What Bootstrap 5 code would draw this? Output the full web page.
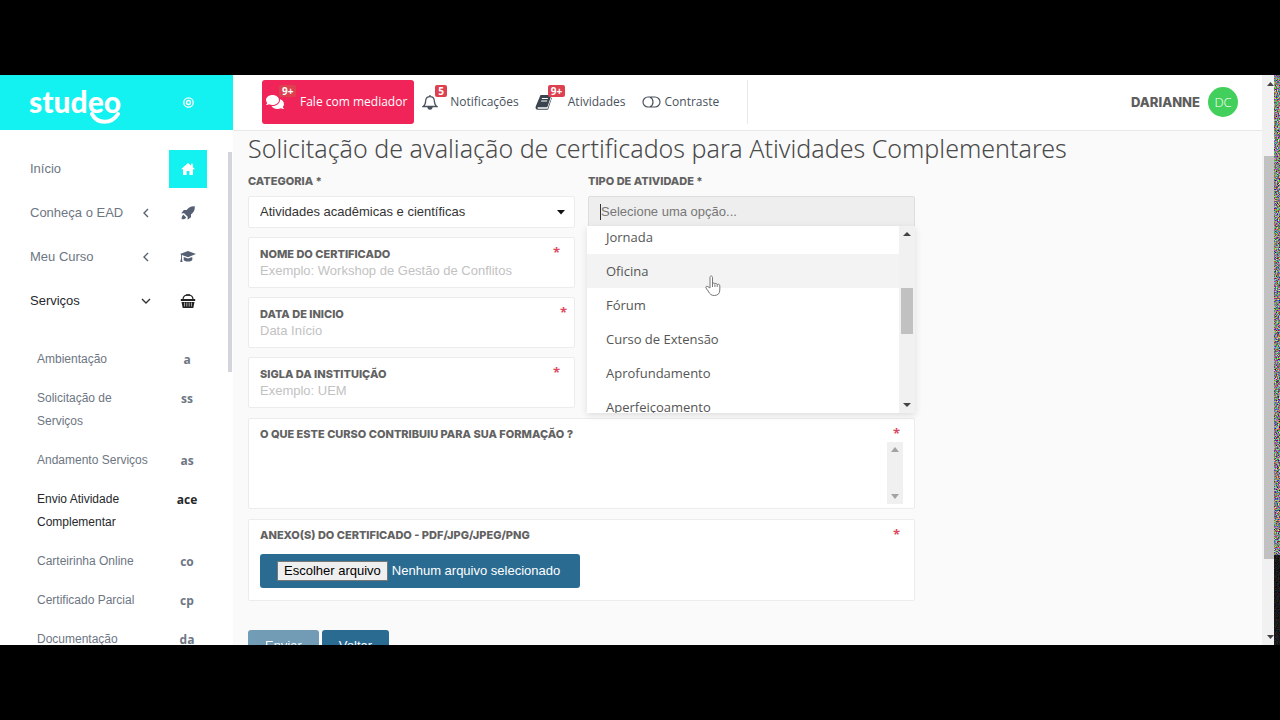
<!DOCTYPE html>
<html lang="pt-BR">
<head>
<meta charset="utf-8">
<meta name="viewport" content="width=device-width, initial-scale=1">
<title>Studeo - Atividades Complementares</title>
<link href="https://cdn.jsdelivr.net/npm/bootstrap@5.3.0/dist/css/bootstrap.min.css" rel="stylesheet">
<style>
:root{--cyan:#13f1f0;--blue:#2a6b92;--line:#ececec;--ink:#626262}
body{background:#000;font-family:"Liberation Sans",sans-serif;font-size:14px;line-height:20px;color:var(--ink)}
.stage{height:100vh;padding:75px 0}
.side{width:233px;background:#fff}
.side a{color:#6d7683;text-decoration:none}
.side a.current{color:#26282c}
.brand{height:55px;background:var(--cyan);padding:0 38px 0 29px}
.side a.brand-name{font:900 30px/30px "Lato",sans-serif;color:#fff;margin-bottom:4px}
.brand-smile{left:61px;top:26px}
.main-links a{height:38px;margin-bottom:6px;padding:0 26px 0 30px;font-size:13px}
.tile{width:38px;height:38px}
.tile-on{background:var(--cyan)}
.chev{width:10px;margin-right:18px}
.sub-links{padding:14px 0 0}
.sub-links a{padding:8px 26px 8px 37px;font-size:12px;line-height:23px}
.sub-links .sub-name{width:116px}
.sub-links b{width:40px;font-family:"Open Sans",sans-serif}
.side-thumb{top:77px;right:1px;width:4px;height:220px;background:#d3d5dc}
.content{background:#fafafa;min-width:0}
.topbar{height:56px;background:#fff;border-bottom:1px solid #e8e8e8;padding:0 24px 1px 29px;font:12px/20px "Open Sans",sans-serif;color:#49525d}
.topbar a{color:inherit;text-decoration:none}
.btn-mediator{height:44px;padding:0 7px 0 4px;background:#f12459;color:#fff;border:0;border-radius:3px;font-size:12px;line-height:20px}
.btn-mediator:hover{background:#d91f50;color:#fff}
.count{font:700 10px/12px "Open Sans",sans-serif;background:#dd4150;color:#fff;border-radius:2px;padding:0 3px;top:-9px;left:13px}
.top-sep{width:1px;height:44px;background:#e9e9e9;margin-left:28px}
.user-name{font:800 13px/20px "Inter",sans-serif;color:#5d5d5d}
.avatar{width:30px;height:30px;background:#42cf5c;color:#fff;font-size:13px}
.page-area{padding:0 15px}
h1{font:300 25px/34px "Noto Sans",sans-serif;color:#4a4a4a;margin:0 0 8px;white-space:nowrap}
.form-area{max-width:667px}
.form-area .row{--bs-gutter-x:13px}
.caps{font:800 11px/16px "Inter",sans-serif;color:var(--ink);text-transform:uppercase;display:block}
.caps-top{margin-bottom:7px}
.field,.box{background:#fff;border:1px solid var(--line);border-radius:2px}
.field{height:32px;padding:0 11px;font-size:13px;color:#333;box-shadow:none}
select.field{background-image:none}
.field-off{background:#eee;border-color:#ddd}
.field-off input::placeholder{color:#777}
.caret-bar{width:1px;height:16px;background:#333}
.pick-arrow{right:10px;top:14px}
.box{padding:8px 11px 7px;margin-top:9px}
.box-wide{padding:7px 11px 4px;margin-top:10px}
.box-file{padding-bottom:12px}
.box input[type=text],.box textarea,.field input{display:block;border:0;outline:0;background:transparent;padding:0;width:100%;height:18px;font-size:13px;line-height:18px;resize:none}
.box textarea{height:62px}
.box input::placeholder{color:#c2c2c2}
.req{top:6px;right:14px;color:#dd4a60;font:700 13px/16px "Open Sans",sans-serif}
.req-date{right:7px}
.track{width:16px;height:62px;background:#f0f0f0;padding:5px 0}
.options{top:100%;left:-1px;right:0;margin-top:-2px;height:187px;background:#fff;box-shadow:0 2px 7px rgba(0,0,0,.12);z-index:5}
.options ul{margin-top:-6px;font:13px/34px "Open Sans",sans-serif;color:#555}
.options li{padding-left:19px}
.options li.hover{background:#f3f3f3}
.options .rail{width:16px;background:#f1f1f1;padding:6px 0}
.options .rail-thumb{width:12px;height:46px;background:#c1c1c1;top:62px;left:2px}
.hand{left:118px;top:49px}
.upload{background:var(--blue);color:#fff;border-radius:3px;height:34px;width:320px;padding:0 17px;font-size:13px;margin-top:11px}
.upload button{font-size:13px;line-height:16px;padding:1px 6px;border:1px solid #777;background:#efefef;color:#000}
.actions{margin-top:29px;gap:3px}
.btn-act{background:var(--blue);color:#fff;border:0;border-radius:3px;padding:0 17px;font-size:13px;line-height:31px}
.btn-act:hover{background:#215675;color:#fff}
.btn-act:disabled{background:var(--blue);color:#fff}
.page-scroll{width:12px;background:#f1f1f1;padding:7px 0 6px 4px}
.page-thumb{background:#c1c1c1;top:81px;left:2px;right:0;height:403px}
.grain{width:6px;background:#777}
</style>
</head>
<body>
<div class="stage d-flex overflow-hidden">
  <aside class="side position-relative flex-shrink-0 overflow-hidden">
    <div class="brand d-flex align-items-center justify-content-between">
      <a href="#" class="position-relative brand-name">studeo
        <svg class="position-absolute brand-smile" width="30" height="12" viewBox="0 0 30 12" fill="none" stroke="#fff" stroke-width="4" stroke-linecap="round"><path d="M2 2Q6 9.800 14.500 9.800T28 2"/></svg>
      </a>
      <svg width="13" height="13" viewBox="0 0 13 13" fill="none" stroke="#fff"><circle cx="6.500" cy="6.500" r="4.700" stroke-width="1.300"/><circle cx="6.500" cy="6.500" r="2" stroke-width="1.400"/></svg>
    </div>
    <nav class="main-links pt-3 mt-1" aria-label="Principal">
      <a href="#" class="d-flex align-items-center"><span class="flex-fill">Início</span>
        <span class="tile tile-on d-flex align-items-center justify-content-center"><svg width="14" height="12" viewBox="0 0 14 12" fill="#fff"><path d="M7 0 0 6.300h2V12h3.600V8h2.800v4H12V6.300h2L11.800 4V.8H10v1.800z"/></svg></span></a>
      <a href="#" class="d-flex align-items-center"><span class="flex-fill">Conheça o EAD</span>
        <svg class="chev" height="10" viewBox="0 0 10 10" fill="none" stroke="#59636f" stroke-width="1.400"><path d="M7 1 3 5l4 4"/></svg>
        <span class="tile d-flex align-items-center justify-content-center"><svg width="14" height="14" viewBox="0 0 14 14" fill="#566074"><path d="M13.800.2C9.900 0 7.600 1.200 5.600 4H2.800L.3 7.300l2.900-.1 3.500 3.500-.1 3L10 11.200V8.400c2.800-2 4-4.300 3.800-8.200zM2.500 8.800C1 9.500.6 11.300.7 13.300c2 .1 3.800-.3 4.500-1.800z"/></svg></span></a>
      <a href="#" class="d-flex align-items-center"><span class="flex-fill">Meu Curso</span>
        <svg class="chev" height="10" viewBox="0 0 10 10" fill="none" stroke="#59636f" stroke-width="1.400"><path d="M7 1 3 5l4 4"/></svg>
        <span class="tile d-flex align-items-center justify-content-center"><svg width="16" height="12" viewBox="0 0 16 12" fill="#566074"><path d="M8 0 0 3l1 .5v4L.2 11h2.300L1.900 7.500V4L8 6.200 16 3zM3.700 5.900V9C5.500 11 10.500 11 12.300 9V5.900L8 7.500z"/></svg></span></a>
      <a href="#" class="d-flex align-items-center current"><span class="flex-fill">Serviços</span>
        <svg class="chev" height="10" viewBox="0 0 10 10" fill="none" stroke="#333" stroke-width="1.400"><path d="m1 3 4 4 4-4"/></svg>
        <span class="tile d-flex align-items-center justify-content-center"><svg width="16" height="14" viewBox="0 0 16 14"><path d="M3 5.500C3 2 5 1 8 1s5 1 5 4.500" fill="none" stroke="#222" stroke-width="1.200"/><path d="M6 .2h4v1.600H6zM.8 5h14.400v2H.8zM1.500 8h13l-1.200 6H2.700z" fill="#222"/><path d="M4.500 8.500v4M6.800 8.500v4M9.200 8.500v4M11.500 8.500v4" stroke="#fff" stroke-width=".6"/></svg></span></a>
    </nav>
    <nav class="sub-links" aria-label="Serviços">
      <a href="#" class="d-flex justify-content-between"><span class="sub-name">Ambientação</span><b class="text-center">a</b></a>
      <a href="#" class="d-flex justify-content-between"><span class="sub-name">Solicitação de<br>Serviços</span><b class="text-center">ss</b></a>
      <a href="#" class="d-flex justify-content-between"><span class="sub-name">Andamento Serviços</span><b class="text-center">as</b></a>
      <a href="#" class="d-flex justify-content-between current"><span class="sub-name">Envio Atividade Complementar</span><b class="text-center">ace</b></a>
      <a href="#" class="d-flex justify-content-between"><span class="sub-name">Carteirinha Online</span><b class="text-center">co</b></a>
      <a href="#" class="d-flex justify-content-between"><span class="sub-name">Certificado Parcial</span><b class="text-center">cp</b></a>
      <a href="#" class="d-flex justify-content-between"><span class="sub-name">Documentação</span><b class="text-center">da</b></a>
    </nav>
    <div class="side-thumb position-absolute"></div>
  </aside>

  <main class="content flex-fill overflow-hidden">
    <header class="topbar d-flex align-items-center">
      <button type="button" class="btn btn-mediator d-flex align-items-center">
        <span class="position-relative d-flex me-3"><svg width="18" height="16" viewBox="0 0 576 512" fill="#fff"><path d="M416 192c0-88.400-93.100-160-208-160S0 103.600 0 192c0 34.300 14.100 65.900 38 92-13.400 30.200-35.500 54.200-35.800 54.500-2.200 2.300-2.800 5.700-1.500 8.700S4.800 352 8 352c36.600 0 66.900-12.300 88.700-25 32.200 15.700 70.300 25 111.300 25 114.900 0 208-71.600 208-160zm122 220c23.900-26 38-57.700 38-92 0-66.900-53.500-124.200-129.300-148.100.9 6.600 1.300 13.300 1.300 20.100 0 105.900-107.700 192-240 192-10.800 0-21.300-.8-31.700-1.900C207.800 439.600 281.800 480 368 480c41 0 79.100-9.200 111.300-25 21.800 12.700 52.100 25 88.700 25 3.200 0 6.100-1.900 7.300-4.800 1.300-2.900.7-6.300-1.500-8.700-.3-.3-22.400-24.200-35.800-54.500z"/></svg><span class="count position-absolute">9+</span></span>
        Fale com mediador</button>
      <a href="#" class="d-flex align-items-center ms-2"><span class="position-relative d-flex me-2"><svg class="me-1" width="16" height="16" viewBox="0 0 16 16" fill="none" stroke="#49525d" stroke-width="1.300"><path d="M8 1v1.500M1.200 12.500C3.500 11 3.500 9 3.700 6.500 4 3.800 5.800 2.600 8 2.600s4 1.200 4.300 3.900c.2 2.500.2 4.500 2.500 6z"/><path d="M6 13.500c.3 2.200 3.700 2.200 4 0z" fill="#49525d"/></svg><span class="count position-absolute">5</span></span>Notificações</a>
      <a href="#" class="d-flex align-items-center ms-3"><span class="position-relative d-flex me-3"><svg width="17" height="16" viewBox="0 0 17 16"><path d="M5.500 1h9.700c.8 0 1 .5.800 1.200l-3.400 10.300c-.2.500-.6.700-1 .7H3.300c-1 0-1.200 1.500 0 1.500h9.200L16 5v-1.500l.8.800L13.300 15c-.2.600-.5.800-1 .8H3C1 15.800 0 14 .8 12.300z" fill="#3a444f"/><path d="m7 4-.3 1h6l.3-1zM6.300 6.500 6 7.500h6l.3-1z" fill="#fff"/></svg><span class="count position-absolute">9+</span></span>Atividades</a>
      <a href="#" class="d-flex align-items-center ms-3"><svg class="me-1" width="19" height="12" viewBox="0 0 19 12" fill="none" stroke="#49525d" stroke-width="1.200"><path d="M6 1h7a5 5 0 0 1 0 10H6A5 5 0 0 1 6 1zM8 1.300c4 1.700 4 7.700 0 9.400"/></svg>Contraste</a>
      <div class="top-sep"></div>
      <a href="#" class="d-flex align-items-center ms-auto"><span class="user-name me-2">DARIANNE</span><span class="avatar rounded-circle d-flex align-items-center justify-content-center fw-light">DC</span></a>
    </header>
    <div class="page-area">
      <h1>Solicitação de avaliação de certificados para Atividades Complementares</h1>
      <form class="form-area">
        <div class="row">
          <div class="col-6">
            <label class="caps caps-top" for="cat">Categoria *</label>
            <div class="position-relative">
              <select id="cat" class="form-select field"><option>Atividades acadêmicas e científicas</option></select>
              <svg class="position-absolute pick-arrow" width="8" height="5" viewBox="0 0 8 5"><path d="M0 0h8L4 4.500z" fill="#111"/></svg>
            </div>
            <div class="box position-relative"><label class="caps" for="nome">Nome do certificado</label><input type="text" id="nome" placeholder="Exemplo: Workshop de Gestão de Conflitos"><span class="req position-absolute">*</span></div>
            <div class="box position-relative"><label class="caps" for="data">Data de inicio</label><input type="text" id="data" placeholder="Data Início"><span class="req req-date position-absolute">*</span></div>
            <div class="box position-relative"><label class="caps" for="sigla">Sigla da instituição</label><input type="text" id="sigla" placeholder="Exemplo: UEM"><span class="req position-absolute">*</span></div>
          </div>
          <div class="col-6">
            <label class="caps caps-top" for="tipo">Tipo de atividade *</label>
            <div class="position-relative">
              <div class="field field-off d-flex align-items-center"><span class="caret-bar"></span><input type="text" id="tipo" role="combobox" aria-expanded="true" aria-controls="tipos" placeholder="Selecione uma opção..."></div>
              <div class="options position-absolute d-flex overflow-hidden">
                <ul id="tipos" role="listbox" class="list-unstyled flex-fill mb-0">
                  <li role="option">Jornada</li><li role="option" class="hover">Oficina</li><li role="option">Fórum</li><li role="option">Curso de Extensão</li><li role="option">Aprofundamento</li><li role="option">Aperfeiçoamento</li>
                </ul>
                <div class="rail position-relative d-flex flex-column align-items-center justify-content-between">
                  <svg width="8" height="4" viewBox="0 0 8 4"><path d="M0 4h8L4 0z" fill="#444"/></svg>
                  <div class="rail-thumb position-absolute"></div>
                  <svg width="8" height="4" viewBox="0 0 8 4"><path d="M0 0h8L4 4z" fill="#444"/></svg>
                </div>
                <svg class="position-absolute hand" width="16" height="22" viewBox="0 0 16 22" fill="#fff" stroke="#777" stroke-width="1"><path d="M5 13V2.500c0-2 2.500-2 2.500 0V9c.2-1.500 2.400-1.300 2.400.2.300-1.200 2.300-1 2.300.6.500-1 2.600-.8 2.600 1V15c0 3.500-2 5.500-5.500 5.500-3 0-4.500-1.500-5.500-3.500L1 13c-.8-1.500 1-2.300 2-1.300z"/><path d="M7.500 9v3M9.900 9.500V12M12.200 10v2" fill="none"/></svg>
              </div>
            </div>
          </div>
        </div>
        <div class="box box-wide position-relative">
          <label class="caps" for="contrib">O que este curso contribuiu para sua formação ?</label>
          <div class="d-flex"><textarea id="contrib" rows="3"></textarea><div class="track d-flex flex-column align-items-center justify-content-between flex-shrink-0"><svg width="8" height="5" viewBox="0 0 8 5"><path d="M0 5h8L4 0z" fill="#a3a3a3"/></svg><svg width="8" height="5" viewBox="0 0 8 5"><path d="M0 0h8L4 5z" fill="#a3a3a3"/></svg></div></div>
          <span class="req position-absolute">*</span>
        </div>
        <div class="box box-wide box-file position-relative">
          <label class="caps" for="anexo">Anexo(s) do certificado - PDF/JPG/JPEG/PNG</label>
          <div class="upload d-flex align-items-center"><button type="button" class="me-1" onclick="document.getElementById('anexo').click()">Escolher arquivo</button><span>Nenhum arquivo selecionado</span><input class="d-none" type="file" id="anexo"></div>
          <span class="req position-absolute">*</span>
        </div>
        <div class="actions d-flex"><button type="submit" class="btn btn-act" disabled>Enviar</button><button type="button" class="btn btn-act">Voltar</button></div>
      </form>
    </div>
  </main>
  <div class="page-scroll position-relative flex-shrink-0 d-flex flex-column align-items-center justify-content-between">
    <svg width="7" height="4" viewBox="0 0 7 4"><path d="M0 4h7L3.500 0z" fill="#444"/></svg>
    <div class="page-thumb position-absolute"></div>
    <svg width="7" height="4" viewBox="0 0 7 4"><path d="M0 0h7L3.500 4z" fill="#444"/></svg>
  </div>
  <div class="grain flex-shrink-0 overflow-hidden">
    <svg width="6" height="100%" aria-hidden="true"><filter id="noise" x="0" y="0" width="100%" height="100%" color-interpolation-filters="sRGB"><feTurbulence type="fractalNoise" baseFrequency=".9" numOctaves="2"/><feComponentTransfer><feFuncR type="linear" slope="2" intercept="-.5"/><feFuncG type="linear" slope="2" intercept="-.5"/><feFuncB type="linear" slope="2" intercept="-.5"/><feFuncA type="linear" slope="0" intercept="1"/></feComponentTransfer></filter><rect width="6" height="100%" filter="url(#noise)"/><rect y="480" width="6" height="100%" opacity=".8"/></svg>
  </div>
</div>
<script src="https://cdn.jsdelivr.net/npm/bootstrap@5.3.0/dist/js/bootstrap.bundle.min.js"></script>
</body>
</html>
